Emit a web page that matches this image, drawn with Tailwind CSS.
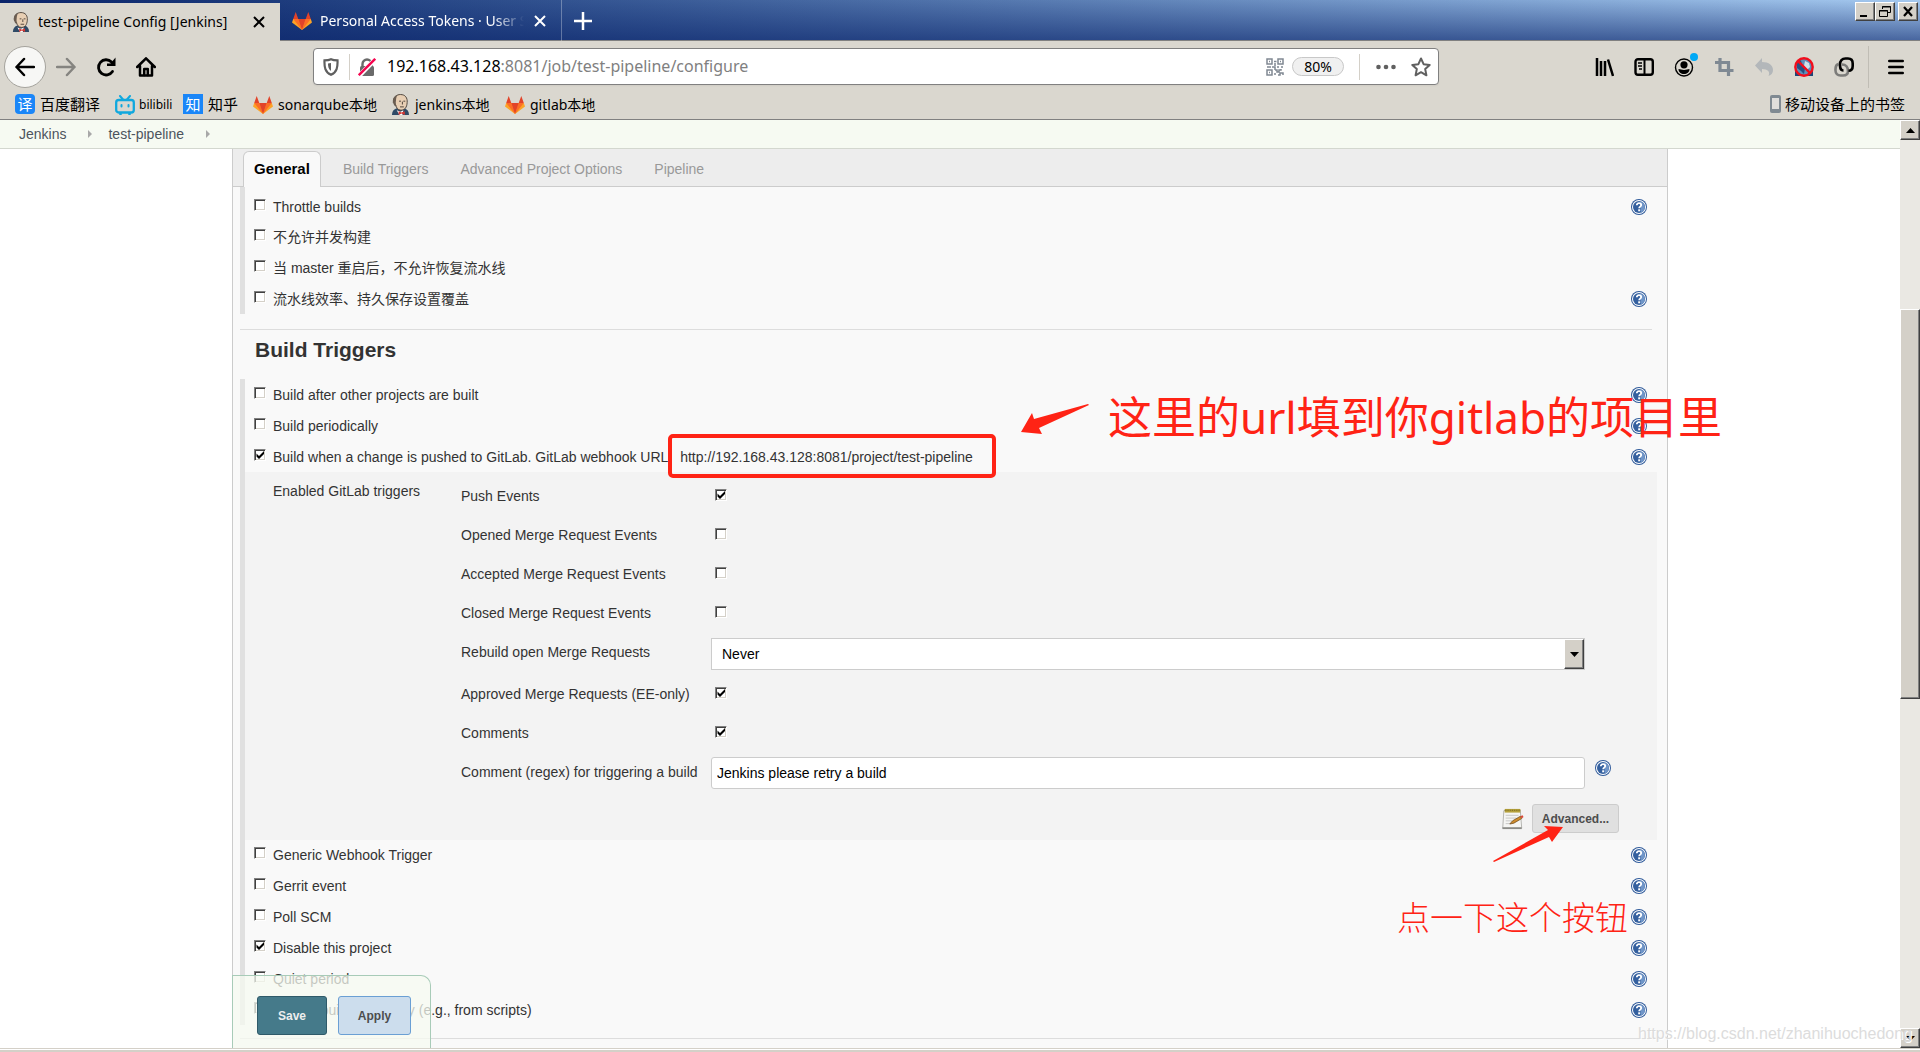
<!DOCTYPE html>
<html lang="en">
<head>
<meta charset="UTF-8">
<meta name="viewport" content="width=device-width, initial-scale=1">
<title>test-pipeline Config [Jenkins]</title>
<script src="https://cdn.jsdelivr.net/npm/@tailwindcss/browser@4"></script>
</head>
<body class="h-screen flex flex-col overflow-hidden bg-white font-['Liberation_Sans','Noto_Sans_CJK_SC',sans-serif] text-sm text-[#333]">

<!-- shared icons -->
<svg class="hidden">
    <symbol id="help" viewBox="0 0 16 16">
        <circle cx="8" cy="8" r="8" fill="#2f5a9a"/>
        <circle cx="8" cy="8" r="7" fill="#fff"/>
        <circle cx="8" cy="8" r="6" fill="#34609f"/>
        <path d="M9 2.200a6 6 0 0 1 1 11.500z" fill="#6f95c8"/>
        <path d="M5.800 6.200C5.800 3.400 10.200 3.600 10.200 6c0 1.600-2 1.700-2 3.200" fill="none" stroke="#fff" stroke-width="1.800"/>
        <rect x="7.200" y="10.300" width="2" height="2" fill="#fff"/>
    </symbol>
    <symbol id="tick" viewBox="0 0 8 8"><path d="M.5 2.500v3L3 8l5-5V0L3 5z" fill="#000"/></symbol>
    <symbol id="cross" viewBox="0 0 12 12"><path d="M1 1l10 10M11 1L1 11" stroke="currentColor" stroke-width="2" fill="none"/></symbol>
    <symbol id="fox" viewBox="0 0 20 18">
        <path d="M10 18L0 10.500 1.200 7h17.600L20 10.500z" fill="#fca326"/>
        <path d="M10 18L1.200 7h5.100zM10 18l8.800-11h-5.100z" fill="#fc6d26"/>
        <path d="M10 18L6.300 7h7.400z" fill="#e24329"/>
        <path d="M3.700 0L1.200 7h5.100zM16.300 0l2.500 7h-5.100z" fill="#e24329"/>
    </symbol>
    <symbol id="butler" viewBox="0 0 20 22">
        <path d="M1 22c0-4 2-6 5-7l8 0c3 1 5 3 5 7z" fill="#2f4a66"/>
        <path d="M2.500 9C2 3 6 .5 10 .5c5 0 7.500 3.500 7 8.500-.3 5-2.500 8-6.500 8-3.500 0-5-3-5.500-5.500z" fill="#e8cfb4" stroke="#4a4038"/>
        <path d="M2.500 9.500C1.500 4 4 1.500 7 1 5 3.500 5.500 6 5 9l.5 4C3.500 13 2.800 11 2.500 9.500z" fill="#6a5d52"/>
        <path d="M8.500 7.500h2M13 7.500h2M12 8v3M9.500 13.500h4" stroke="#4a4038" fill="none"/>
        <path d="M6 17l3 5h3l1-5-3 1.500z" fill="#fff"/>
        <path d="M8 18l3 1.500 3.500-1.500v4L11 20.500 8 22z" fill="#d33833"/>
    </symbol>
</svg>

<!-- window title bar with tabs -->
<div class="relative h-[41px] shrink-0 flex bg-linear-to-r from-[#0a246a] to-[#a6caf0] font-['Noto_Sans','Noto_Sans_CJK_SC',sans-serif]">
    <div class="absolute inset-0 bg-linear-to-b from-transparent to-[#0a246a]/60 border-b border-[#808080]"></div>
    <div class="relative mt-[3px] w-[280px] bg-[#dad7cf] flex items-center pl-3 pr-[15px] text-black">
        <svg class="w-[18px] h-5 shrink-0"><use href="#butler"/></svg>
        <span class="ml-2 text-[14px] whitespace-nowrap">test-pipeline Config [Jenkins]</span>
        <button class="ml-auto" aria-label="Close tab"><svg class="w-3 h-3 block"><use href="#cross"/></svg></button>
    </div>
    <div class="relative w-[282px] flex items-center pl-3 pr-[15px] text-white border-r border-white/30">
        <svg class="w-[20px] h-[18px] shrink-0"><use href="#fox"/></svg>
        <span class="ml-2 w-[204px] overflow-hidden text-[14px] whitespace-nowrap mask-r-from-85%">Personal Access Tokens · User Settings</span>
        <button class="ml-auto" aria-label="Close tab"><svg class="w-3 h-3 block"><use href="#cross"/></svg></button>
    </div>
    <button class="relative w-[42px] flex items-center justify-center text-white" aria-label="New tab">
        <svg class="w-[18px] h-[18px]" viewBox="0 0 18 18"><path d="M9 0v18M0 9h18" stroke="currentColor" stroke-width="2.500"/></svg>
    </button>
    <div class="relative ml-auto mt-[2px] mr-[2px] flex h-[19px] text-black">
        <button class="w-5 bg-[#d4d0c8] border border-white border-r-[#404040] border-b-[#404040] shadow-[inset_-1px_-1px_0_#808080]" aria-label="Minimize"><svg class="w-full h-full" viewBox="0 0 18 17"><path d="M4 12h7v2H4z"/></svg></button>
        <button class="w-5 bg-[#d4d0c8] border border-white border-r-[#404040] border-b-[#404040] shadow-[inset_-1px_-1px_0_#808080]" aria-label="Restore"><svg class="w-full h-full" viewBox="0 0 18 17" fill="none" stroke="#000"><path d="M6.500 6V3.500h8v6H12M6 4h9M3.500 7.500h8v6h-8zM3 8h9"/></svg></button>
        <button class="ml-[3px] w-5 bg-[#d4d0c8] border border-white border-r-[#404040] border-b-[#404040] shadow-[inset_-1px_-1px_0_#808080]" aria-label="Close"><svg class="w-full h-full" viewBox="0 0 18 17"><path d="M5 4l8 9M13 4l-8 9" stroke="#000" stroke-width="2.200"/></svg></button>
    </div>
</div>

<!-- navigation toolbar -->
<div class="h-[51px] shrink-0 flex items-center bg-[#dad7cf] text-black font-['Noto_Sans','Noto_Sans_CJK_SC',sans-serif]">
    <div class="w-[313px] flex items-center pl-1">
        <button class="w-[42px] h-[42px] rounded-full bg-[#f7f7f5] border border-[#a5a39d] flex items-center justify-center" aria-label="Back"><svg class="w-5 h-5" viewBox="0 0 20 20" fill="none" stroke="#000" stroke-width="2.500" stroke-linecap="round" stroke-linejoin="round"><path d="M19 10H1.500M9 2L1.500 10 9 18"/></svg></button>
        <button class="ml-[10px] w-5" aria-label="Forward"><svg class="w-5 h-5" viewBox="0 0 20 20" fill="none" stroke="#858480" stroke-width="2.500" stroke-linecap="round" stroke-linejoin="round"><path d="M1 10h17.500M11 2l7.500 8-7.500 8"/></svg></button>
        <button class="ml-5 w-5" aria-label="Reload"><svg class="w-5 h-5" viewBox="0 0 20 20"><path d="M16.500 14.500A7.600 7.600 0 1 1 15.500 5" fill="none" stroke="#000" stroke-width="2.800" stroke-linecap="round"/><path d="M19.500 .5v8.500H11v-2.500h3.500z"/></svg></button>
        <button class="ml-5 w-5" aria-label="Home"><svg class="w-5 h-5" viewBox="0 0 20 20" fill="none" stroke="#000" stroke-width="2.500" stroke-linecap="round" stroke-linejoin="round"><path d="M1.200 10L10 1.300 18.800 10M4 9v9.500h12V9"/><path d="M8.200 18v-6h3.600v6"/></svg></button>
    </div>
    <div class="w-[1126px] h-[37px] flex items-center bg-white border border-[#808080] rounded-sm shadow-xs pl-[9px] pr-[7px]">
        <svg class="w-4 h-[18px] shrink-0" viewBox="0 0 16 18"><path d="M8 1.200c2 1 4 1.200 6.500 1.200C14.800 9 14 14 8 16.800 2 14 1.200 9 1.500 2.400 4 2.400 6 2.200 8 1.200z" fill="none" stroke="#5f5f5f" stroke-width="2.200"/><path d="M8 5v8C5.500 11 5 9 5 5.500z" fill="#5f5f5f"/></svg>
        <div class="ml-[10px] w-px h-[26px] bg-[#d4d0c8]"></div>
        <svg class="ml-2 w-[18px] h-[18px] shrink-0" viewBox="0 0 18 18"><path d="M4.500 9V6a4.500 4.500 0 0 1 9 0v3" fill="none" stroke="#6a6a6a" stroke-width="2.400"/><rect x="2" y="8" width="14" height="10" rx="1.500" fill="#6a6a6a"/><path d="M1 18L17.500 1" stroke="#fff" stroke-width="4.500"/><path d="M.8 17.200L17.200 .8" stroke="#f5054f" stroke-width="2.400"/></svg>
        <div role="textbox" contenteditable="true" spellcheck="false" aria-label="Address" class="ml-[11px] flex-1 text-[16px] text-[#808080] whitespace-nowrap outline-none"><span class="text-black">192.168.43.128</span>:8081/job/test-pipeline/configure</div>
        <svg class="w-[18px] h-[18px] shrink-0" viewBox="0 0 18 18" fill="none" stroke="#808892" stroke-width="1.500"><path d="M1 1h5v5H1zM12 1h5v5h-5zM1 12h5v5H1z"/><path d="M3 3.500h1M14 3.500h1M3 14.500h1M8 3.500h2.500M9 5v3M1 9h4M6 9h3v3M11 9h2M15 9h2M9 12h2v2h2v-2h2v-1M9 15v2M12 17h2v-2h3v2"/></svg>
        <button class="ml-2 w-[52px] h-[19px] rounded-full bg-[#f0f0f0] border border-[#c8c8c8] text-[14px] leading-4">80%</button>
        <div class="ml-[15px] w-px h-[26px] bg-[#d4d0c8]"></div>
        <svg class="ml-4 w-5 h-5 shrink-0" viewBox="0 0 20 20" fill="#606060"><circle cx="2.500" cy="10" r="2.300"/><circle cx="10" cy="10" r="2.300"/><circle cx="17.500" cy="10" r="2.300"/></svg>
        <svg class="ml-[15px] w-5 h-5 shrink-0" viewBox="0 0 20 20"><path d="M10 1.500l2.600 5.700 6.100.7-4.500 4.200 1.200 6.200L10 15.200l-5.400 3.100 1.200-6.200L1.300 7.900l6.100-.7z" fill="none" stroke="#606060" stroke-width="2" stroke-linejoin="round"/></svg>
    </div>
    <div class="ml-auto flex items-center gap-5 pr-4">
        <svg class="w-5 h-5" viewBox="0 0 20 20" fill="none" stroke="#000" stroke-width="2.500"><path d="M3 1v18M7 4v15M11 4v15M14 2.500L19 19"/></svg>
        <svg class="w-5 h-5" viewBox="0 0 20 20" fill="none" stroke="#000"><rect x="1.500" y="2.200" width="17.300" height="15.600" rx="2.500" stroke-width="2.400"/><path d="M10.500 2v16" stroke-width="2"/><path d="M4 6h4M4 9h4M5 12h3" stroke-width="1.300"/></svg>
        <div class="relative">
            <svg class="w-5 h-5" viewBox="0 0 20 20"><circle cx="10" cy="10.500" r="8.500" fill="none" stroke="#000" stroke-width="1.400"/><circle cx="10" cy="7.800" r="3.600"/><path d="M4.500 12c2 0 3 1 5.500 1s3.500-1 5.500-1c0 3.500-2.500 5-5.500 5s-5.500-1.500-5.500-5z"/></svg>
            <span class="absolute -top-1 -right-1 w-2 h-2 rounded-full bg-[#00a8f5]"></span>
        </div>
        <svg class="w-5 h-5" viewBox="0 0 20 20" fill="none" stroke="#7f8993" stroke-width="3.200"><path d="M6 1v12.500h13.500M1 5.500h13.500v13.500"/></svg>
        <svg class="w-5 h-5" viewBox="0 0 20 20"><path d="M8 1v4c7 0 11 3.500 11 8 0 3-1.500 5-4.500 6 2-4-.5-7-6.500-7v4L1 8.500z" fill="#b3b7ba"/></svg>
        <svg class="w-5 h-5" viewBox="0 0 20 20"><path d="M1 12h18v7H1z" fill="#1d4678"/><circle cx="10" cy="9.500" r="8.500" fill="#5e8fba"/><path d="M3 6l4-3 1 5 3 3-1 6-3-3-4-3z" fill="#285083"/><path d="M11 4l4 2 1 4-3 3-3-4z" fill="#cfdfe9"/><circle cx="10" cy="10" r="8.700" fill="none" stroke="#f20d1c" stroke-width="2.400"/><path d="M4 4l12 12" stroke="#f20d1c" stroke-width="2.400"/></svg>
        <svg class="w-5 h-5" viewBox="0 0 20 20" fill="none" stroke-width="2.600"><path d="M4.500 7C2.500 7.500 1.500 9.500 1.500 12v1.500c0 3 2 5 5 5H9c3 0 5-1.500 5-4.500 0-4-2-6.500-6-6.500" stroke="#7c7c7a"/><path d="M9.500 13.500C6 13.500 6 10.500 6 7.500 6 4 8 1.500 11.500 1.500h2.500c3 0 4.700 2 4.700 5v2.500c0 3-1.700 4.700-4.200 4.700" stroke="#000"/></svg>
        <div class="-ml-[6px] w-px h-[42px] bg-[#c0bdb5]"></div>
        <button class="-ml-px" aria-label="Menu"><svg class="w-4 h-4" viewBox="0 0 16 16" stroke="#000" stroke-width="2.400" stroke-linecap="round"><path d="M1.200 2h13.600M1.200 8h13.600M1.200 14h13.600"/></svg></button>
    </div>
</div>

<!-- bookmarks -->
<nav class="h-[28px] shrink-0 flex items-center pb-[2px] px-[15px] bg-[#dad7cf] border-b border-[#808080] text-[14px] text-black font-['Noto_Sans','Noto_Sans_CJK_SC',sans-serif] whitespace-nowrap">
    <a href="#" class="w-[100px] flex items-center gap-[5px]"><span class="w-5 h-5 rounded-sm bg-[#1a86f8] text-white text-[15px] leading-5 text-center">译</span><span class="text-[15px]">百度翻译</span></a>
    <a href="#" class="w-[68px] flex items-center gap-1 text-xs"><svg class="w-5 h-5" viewBox="0 0 20 20" fill="none" stroke="#10a8de" stroke-width="2" stroke-linecap="round"><path d="M5 1l3 3.500M15 1l-3 3.500"/><rect x="1.200" y="5" width="17.600" height="12.500" rx="2.500" stroke-width="2.300"/><path d="M6.500 10v1.500M13.500 10v1.500M5 19h1M14 19h1"/></svg>bilibili</a>
    <a href="#" class="w-[70px] flex items-center gap-[5px]"><span class="w-5 h-5 bg-[#1a86f8] text-white text-[15px] leading-5 text-center">知</span><span class="text-[15px]">知乎</span></a>
    <a href="#" class="w-[138px] flex items-center gap-[5px]"><svg class="w-5 h-[18px]"><use href="#fox"/></svg><span>sonarqube本地</span></a>
    <a href="#" class="w-[114px] flex items-center gap-[5px]"><svg class="w-[19px] h-[21px]"><use href="#butler"/></svg><span>jenkins本地</span></a>
    <a href="#" class="flex items-center gap-[5px]"><svg class="w-5 h-[18px]"><use href="#fox"/></svg><span>gitlab本地</span></a>
    <a href="#" class="ml-auto flex items-center gap-1 text-[15px]"><svg class="w-[11px] h-[18px]" viewBox="0 0 11 18"><rect width="11" height="18" rx="2" fill="#808a92"/><path d="M2 3h7v11H2z" fill="#e0dedb"/></svg>移动设备上的书签</a>
</nav>

<div class="flex-1 min-h-0 flex">
    <div class="flex-1 min-w-0 flex flex-col">
        <!-- breadcrumb -->
        <nav class="h-[29px] shrink-0 flex items-center pl-[19px] bg-[#f6faf2] border-b border-[#d3d7cf] text-[#4d545d]">
            <a href="#">Jenkins</a>
            <svg class="ml-[22px] mr-4 w-1 h-2" viewBox="0 0 4 8"><path d="M0 0l4 4-4 4z" fill="#a8a8a8"/></svg>
            <a href="#">test-pipeline</a>
            <svg class="ml-[22px] w-1 h-2" viewBox="0 0 4 8"><path d="M0 0l4 4-4 4z" fill="#a8a8a8"/></svg>
        </nav>

        <main class="relative flex-1 min-h-0 mx-[232px] border-x border-[#ccc] bg-[#f9f9f9]">
            <div class="h-full overflow-hidden">
                <div class="h-[38px] flex items-end gap-3 pl-[10px] bg-[#ededed] border-b border-[#ccc] text-[#999] leading-[34px]">
                    <a href="#" class="-mb-px h-9 px-[10px] bg-[#f9f9f9] border border-b-0 border-[#ccc] rounded-t-md font-bold text-[15px] text-black">General</a>
                    <a href="#" class="px-[10px]">Build Triggers</a>
                    <a href="#" class="px-[10px]">Advanced Project Options</a>
                    <a href="#" class="px-[10px]">Pipeline</a>
                </div>

                <form class="pl-[7px] pr-[10px]">
                    <section class="border-l-[5px] border-[#e0e0e0] pt-1">
                        <div class="h-[31px] flex items-center justify-between pl-[9px] pr-[10px]"><label class="flex items-center gap-[7px]"><span class="relative mb-1 w-3 h-3"><input type="checkbox" class="peer block appearance-none w-3 h-3 bg-white border border-[#808080] border-r-white border-b-white shadow-[inset_1px_1px_0_#404040,inset_-1px_-1px_0_#d4d0c8]"><svg class="hidden peer-checked:block absolute left-[2px] top-[2px] w-2 h-2"><use href="#tick"/></svg></span>Throttle builds</label><svg class="w-4 h-4"><use href="#help"/></svg></div>
                        <div class="h-[30px] flex items-center justify-between pl-[9px] pr-[10px]"><label class="flex items-center gap-[7px]"><span class="relative mb-1 w-3 h-3"><input type="checkbox" class="peer block appearance-none w-3 h-3 bg-white border border-[#808080] border-r-white border-b-white shadow-[inset_1px_1px_0_#404040,inset_-1px_-1px_0_#d4d0c8]"><svg class="hidden peer-checked:block absolute left-[2px] top-[2px] w-2 h-2"><use href="#tick"/></svg></span>不允许并发构建</label></div>
                        <div class="h-[31px] flex items-center justify-between pl-[9px] pr-[10px]"><label class="flex items-center gap-[7px]"><span class="relative mb-1 w-3 h-3"><input type="checkbox" class="peer block appearance-none w-3 h-3 bg-white border border-[#808080] border-r-white border-b-white shadow-[inset_1px_1px_0_#404040,inset_-1px_-1px_0_#d4d0c8]"><svg class="hidden peer-checked:block absolute left-[2px] top-[2px] w-2 h-2"><use href="#tick"/></svg></span>当 master 重启后，不允许恢复流水线</label></div>
                        <div class="h-[31px] flex items-center justify-between pl-[9px] pr-[10px]"><label class="flex items-center gap-[7px]"><span class="relative mb-1 w-3 h-3"><input type="checkbox" class="peer block appearance-none w-3 h-3 bg-white border border-[#808080] border-r-white border-b-white shadow-[inset_1px_1px_0_#404040,inset_-1px_-1px_0_#d4d0c8]"><svg class="hidden peer-checked:block absolute left-[2px] top-[2px] w-2 h-2"><use href="#tick"/></svg></span>流水线效率、持久保存设置覆盖</label><svg class="w-4 h-4"><use href="#help"/></svg></div>
                    </section>

                    <h2 class="mt-[15px] mr-[5px] h-[50px] border-t border-[#ddd] pl-[15px] pt-[6px] text-[21px] leading-7 font-bold">Build Triggers</h2>

                    <section class="border-l-[5px] border-[#e0e0e0]">
                        <div class="h-[31px] flex items-center justify-between pl-[9px] pr-[10px]"><label class="flex items-center gap-[7px]"><span class="relative mb-1 w-3 h-3"><input type="checkbox" class="peer block appearance-none w-3 h-3 bg-white border border-[#808080] border-r-white border-b-white shadow-[inset_1px_1px_0_#404040,inset_-1px_-1px_0_#d4d0c8]"><svg class="hidden peer-checked:block absolute left-[2px] top-[2px] w-2 h-2"><use href="#tick"/></svg></span>Build after other projects are built</label><svg class="w-4 h-4"><use href="#help"/></svg></div>
                        <div class="h-[31px] flex items-center justify-between pl-[9px] pr-[10px]"><label class="flex items-center gap-[7px]"><span class="relative mb-1 w-3 h-3"><input type="checkbox" class="peer block appearance-none w-3 h-3 bg-white border border-[#808080] border-r-white border-b-white shadow-[inset_1px_1px_0_#404040,inset_-1px_-1px_0_#d4d0c8]"><svg class="hidden peer-checked:block absolute left-[2px] top-[2px] w-2 h-2"><use href="#tick"/></svg></span>Build periodically</label><svg class="w-4 h-4"><use href="#help"/></svg></div>
                        <div class="h-[31px] flex items-center justify-between pl-[9px] pr-[10px]"><label class="flex items-center gap-[7px]"><span class="relative mb-1 w-3 h-3"><input type="checkbox" checked class="peer block appearance-none w-3 h-3 bg-white border border-[#808080] border-r-white border-b-white shadow-[inset_1px_1px_0_#404040,inset_-1px_-1px_0_#d4d0c8]"><svg class="hidden peer-checked:block absolute left-[2px] top-[2px] w-2 h-2"><use href="#tick"/></svg></span><span>Build when a change is pushed to GitLab. GitLab webhook URL: <span class="ml-1">http://192.168.43.128:8081/project/test-pipeline</span></span></label><svg class="w-4 h-4"><use href="#help"/></svg></div>

                        <!-- gitlab trigger settings -->
                        <div class="bg-[#f3f3f3] pl-7 pt-[5px] pb-[7px]">
                            <div class="flex">
                                <div class="w-[188px] shrink-0 leading-[29px]">Enabled GitLab triggers</div>
                                <div class="flex-1 grid grid-cols-[250px_1fr_72px]">
                                    <label for="push" class="leading-[39px]">Push Events</label>
                                    <div class="col-span-2 flex items-center pl-1"><span class="relative mb-1 w-3 h-3"><input id="push" type="checkbox" checked class="peer block appearance-none w-3 h-3 bg-white border border-[#808080] border-r-white border-b-white shadow-[inset_1px_1px_0_#404040,inset_-1px_-1px_0_#d4d0c8]"><svg class="hidden peer-checked:block absolute left-[2px] top-[2px] w-2 h-2"><use href="#tick"/></svg></span></div>
                                    <label for="opened" class="leading-[39px]">Opened Merge Request Events</label>
                                    <div class="col-span-2 flex items-center pl-1"><span class="relative mb-1 w-3 h-3"><input id="opened" type="checkbox" class="peer block appearance-none w-3 h-3 bg-white border border-[#808080] border-r-white border-b-white shadow-[inset_1px_1px_0_#404040,inset_-1px_-1px_0_#d4d0c8]"><svg class="hidden peer-checked:block absolute left-[2px] top-[2px] w-2 h-2"><use href="#tick"/></svg></span></div>
                                    <label for="accepted" class="leading-[39px]">Accepted Merge Request Events</label>
                                    <div class="col-span-2 flex items-center pl-1"><span class="relative mb-1 w-3 h-3"><input id="accepted" type="checkbox" class="peer block appearance-none w-3 h-3 bg-white border border-[#808080] border-r-white border-b-white shadow-[inset_1px_1px_0_#404040,inset_-1px_-1px_0_#d4d0c8]"><svg class="hidden peer-checked:block absolute left-[2px] top-[2px] w-2 h-2"><use href="#tick"/></svg></span></div>
                                    <label for="closed" class="leading-[39px]">Closed Merge Request Events</label>
                                    <div class="col-span-2 flex items-center pl-1"><span class="relative mb-1 w-3 h-3"><input id="closed" type="checkbox" class="peer block appearance-none w-3 h-3 bg-white border border-[#808080] border-r-white border-b-white shadow-[inset_1px_1px_0_#404040,inset_-1px_-1px_0_#d4d0c8]"><svg class="hidden peer-checked:block absolute left-[2px] top-[2px] w-2 h-2"><use href="#tick"/></svg></span></div>
                                    <label for="rebuild" class="leading-[39px]">Rebuild open Merge Requests</label>
                                    <div class="relative h-[42px] py-[5px]">
                                        <select id="rebuild" class="block w-full h-8 appearance-none bg-white border border-[#ccc] pl-[10px] text-black"><option>Never</option></select>
                                        <span class="pointer-events-none absolute right-px top-[6px] w-5 h-[30px] flex items-center justify-center bg-[#d4d0c8] border border-white border-r-[#404040] border-b-[#404040] shadow-[inset_-1px_-1px_0_#808080]"><svg class="w-[9px] h-[5px]" viewBox="0 0 9 5"><path d="M0 0h9L4.500 5z"/></svg></span>
                                    </div>
                                    <span></span>
                                    <label for="approved" class="leading-[39px]">Approved Merge Requests (EE-only)</label>
                                    <div class="col-span-2 flex items-center pl-1"><span class="relative mb-1 w-3 h-3"><input id="approved" type="checkbox" checked class="peer block appearance-none w-3 h-3 bg-white border border-[#808080] border-r-white border-b-white shadow-[inset_1px_1px_0_#404040,inset_-1px_-1px_0_#d4d0c8]"><svg class="hidden peer-checked:block absolute left-[2px] top-[2px] w-2 h-2"><use href="#tick"/></svg></span></div>
                                    <label for="comments" class="leading-[39px]">Comments</label>
                                    <div class="col-span-2 flex items-center pl-1"><span class="relative mb-1 w-3 h-3"><input id="comments" type="checkbox" checked class="peer block appearance-none w-3 h-3 bg-white border border-[#808080] border-r-white border-b-white shadow-[inset_1px_1px_0_#404040,inset_-1px_-1px_0_#d4d0c8]"><svg class="hidden peer-checked:block absolute left-[2px] top-[2px] w-2 h-2"><use href="#tick"/></svg></span></div>
                                    <label for="regex" class="leading-[39px]">Comment (regex) for triggering a build</label>
                                    <div class="h-[42px] py-1"><input id="regex" type="text" value="Jenkins please retry a build" class="block w-full h-8 bg-white border border-[#ccc] rounded-[3px] px-[5px] text-black"></div>
                                    <svg class="ml-[10px] mt-[7px] w-4 h-4"><use href="#help"/></svg>
                                </div>
                            </div>
                            <div class="mt-[9px] pr-[38px] flex justify-end items-center gap-2">
                                <svg class="w-[22px] h-6" viewBox="0 0 24 24"><path d="M2 3h18l1.500 19H.8z" fill="#f5f5f3" stroke="#b0b0ac"/><path d="M.5 21h21v2H.5z" fill="#8c8c88"/><path d="M3 1h17v4H3z" fill="#b5a13c"/><path d="M3 2.500h17" stroke="#6d5f1c" stroke-dasharray="1 1"/><path d="M4 8h14M4 11h12M4 14h7M4 17h5" stroke="#c4c4c4"/><path d="M8.500 17.500l3-3.500 8.500-5 1.500 2.500-8.500 5z" fill="#d08c2c" stroke="#6d4a1a" stroke-width=".8"/><path d="M20 9l2.500-1.200 1 2-2 1.700z" fill="#d84a3a"/></svg>
                                <button type="button" class="h-[29px] w-[87px] bg-[#e0e0e0] border border-[#ccc] rounded-[3px] text-xs font-bold text-[#4d4d4d]">Advanced...</button>
                            </div>
                        </div>

                        <div class="h-[30px] flex items-center justify-between pl-[9px] pr-[10px]"><label class="flex items-center gap-[7px]"><span class="relative mb-1 w-3 h-3"><input type="checkbox" class="peer block appearance-none w-3 h-3 bg-white border border-[#808080] border-r-white border-b-white shadow-[inset_1px_1px_0_#404040,inset_-1px_-1px_0_#d4d0c8]"><svg class="hidden peer-checked:block absolute left-[2px] top-[2px] w-2 h-2"><use href="#tick"/></svg></span>Generic Webhook Trigger</label><svg class="w-4 h-4"><use href="#help"/></svg></div>
                        <div class="h-[31px] flex items-center justify-between pl-[9px] pr-[10px]"><label class="flex items-center gap-[7px]"><span class="relative mb-1 w-3 h-3"><input type="checkbox" class="peer block appearance-none w-3 h-3 bg-white border border-[#808080] border-r-white border-b-white shadow-[inset_1px_1px_0_#404040,inset_-1px_-1px_0_#d4d0c8]"><svg class="hidden peer-checked:block absolute left-[2px] top-[2px] w-2 h-2"><use href="#tick"/></svg></span>Gerrit event</label><svg class="w-4 h-4"><use href="#help"/></svg></div>
                        <div class="h-[31px] flex items-center justify-between pl-[9px] pr-[10px]"><label class="flex items-center gap-[7px]"><span class="relative mb-1 w-3 h-3"><input type="checkbox" class="peer block appearance-none w-3 h-3 bg-white border border-[#808080] border-r-white border-b-white shadow-[inset_1px_1px_0_#404040,inset_-1px_-1px_0_#d4d0c8]"><svg class="hidden peer-checked:block absolute left-[2px] top-[2px] w-2 h-2"><use href="#tick"/></svg></span>Poll SCM</label><svg class="w-4 h-4"><use href="#help"/></svg></div>
                        <div class="h-[31px] flex items-center justify-between pl-[9px] pr-[10px]"><label class="flex items-center gap-[7px]"><span class="relative mb-1 w-3 h-3"><input type="checkbox" checked class="peer block appearance-none w-3 h-3 bg-white border border-[#808080] border-r-white border-b-white shadow-[inset_1px_1px_0_#404040,inset_-1px_-1px_0_#d4d0c8]"><svg class="hidden peer-checked:block absolute left-[2px] top-[2px] w-2 h-2"><use href="#tick"/></svg></span>Disable this project</label><svg class="w-4 h-4"><use href="#help"/></svg></div>
                        <div class="h-[31px] flex items-center justify-between pl-[9px] pr-[10px]"><label class="flex items-center gap-[7px]"><span class="relative mb-1 w-3 h-3"><input type="checkbox" class="peer block appearance-none w-3 h-3 bg-white border border-[#808080] border-r-white border-b-white shadow-[inset_1px_1px_0_#404040,inset_-1px_-1px_0_#d4d0c8]"><svg class="hidden peer-checked:block absolute left-[2px] top-[2px] w-2 h-2"><use href="#tick"/></svg></span>Quiet period</label><svg class="w-4 h-4"><use href="#help"/></svg></div>
                        <div class="h-[31px] flex items-center justify-between pl-[9px] pr-[10px]"><label class="flex items-center gap-[7px]"><span class="relative mb-1 w-3 h-3"><input type="checkbox" class="peer block appearance-none w-3 h-3 bg-white border border-[#808080] border-r-white border-b-white shadow-[inset_1px_1px_0_#404040,inset_-1px_-1px_0_#d4d0c8]"><svg class="hidden peer-checked:block absolute left-[2px] top-[2px] w-2 h-2"><use href="#tick"/></svg></span>Trigger builds remotely (e.g., from scripts)</label><svg class="w-4 h-4"><use href="#help"/></svg></div>
                    </section>
                    <hr class="mt-[13px] mr-[5px] border-[#ddd]">
                </form>
            </div>

            <!-- sticky save bar -->
            <div class="absolute -left-px bottom-0 flex gap-[11px] pl-6 pr-[19px] pt-5 pb-[13px] bg-[#f6faf0]/75 border border-b-0 border-[#a8cbb8] rounded-tr-[10px] text-xs font-bold">
                <button type="button" class="w-[70px] h-[39px] rounded-[3px] bg-[#457a8a] border border-[#2f5a69] text-[#eee]">Save</button>
                <button type="button" class="w-[73px] h-[39px] rounded-[3px] bg-[#ccdded] border border-[#6a9fd4] text-[#4d4d4d]">Apply</button>
            </div>

            <!-- notes drawn over the page -->
            <div class="absolute left-[435px] top-[285px] w-[328px] h-[44px] border-4 border-[#ff2315] rounded-[5px]"></div>
            <svg class="absolute left-[787px] top-[254px] w-[70px] h-[32px]" viewBox="0 0 70 32"><path d="M1 29L12 10l2 6L68 1l1 1L19 25l3 6z" fill="#ff2315"/></svg>
            <p class="absolute left-[875px] top-[238px] whitespace-nowrap text-[44px] leading-[60px] font-normal text-[#ff2315] font-['Noto_Sans','Noto_Sans_CJK_SC',sans-serif]">这里的url填到你gitlab的项目里</p>
            <svg class="absolute left-[1259px] top-[676px] w-[72px] h-[38px]" viewBox="0 0 72 38"><path d="M71 2L52 1l4 4L1 36l1 1L57 12l3 5z" fill="#ff2315"/></svg>
            <p class="absolute left-[1164px] top-[742px] whitespace-nowrap text-[33px] leading-[50px] font-light text-[#ff2315] font-['Noto_Sans_CJK_SC',sans-serif]">点一下这个按钮</p>
        </main>
    </div>

    <!-- scrollbar -->
    <div class="w-5 shrink-0 flex flex-col bg-[#eae8e3]">
        <div class="h-5 flex items-center justify-center bg-[#d4d0c8] border border-white border-r-[#404040] border-b-[#404040] shadow-[inset_-1px_-1px_0_#808080]"><svg class="w-[9px] h-[5px]" viewBox="0 0 9 5"><path d="M0 5h9L4.500 0z"/></svg></div>
        <div class="flex-17"></div>
        <div class="flex-39 bg-[#d4d0c8] border border-white border-r-[#404040] border-b-[#404040] shadow-[inset_-1px_-1px_0_#808080]"></div>
        <div class="flex-33"></div>
        <div class="h-5 flex items-center justify-center bg-[#d4d0c8] border border-white border-r-[#404040] border-b-[#404040] shadow-[inset_-1px_-1px_0_#808080]"><svg class="w-[9px] h-[5px]" viewBox="0 0 9 5"><path d="M0 0h9L4.500 5z"/></svg></div>
    </div>
</div>

<div class="h-1 shrink-0 bg-[#d4d0c8] border-t border-[#d4d0c8]"><div class="h-px bg-white"></div></div>
<p class="absolute right-2 bottom-[6px] text-base text-[#dcdcdc] [text-shadow:1px_1px_0_#fff]">https://blog.csdn.net/zhanihuochedong</p>
</body>
</html>
